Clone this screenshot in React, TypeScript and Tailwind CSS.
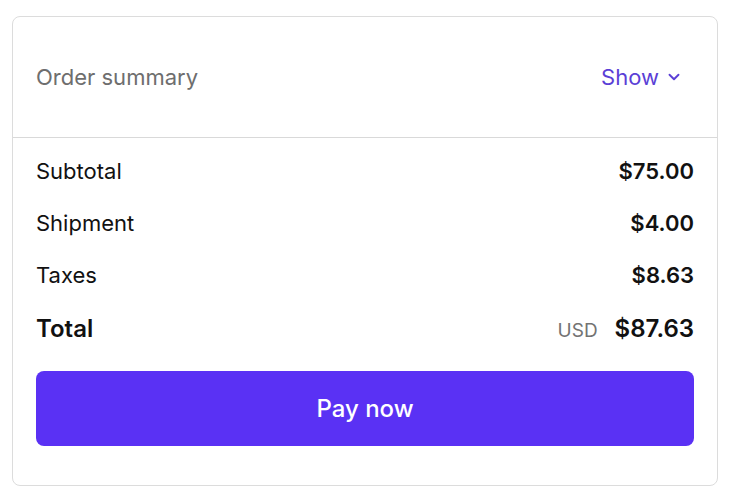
import { ChevronDown } from "lucide-react";

const rows = [
  { label: "Subtotal", value: "$75.00" },
  { label: "Shipment", value: "$4.00" },
  { label: "Taxes", value: "$8.63" },
];

export default function App() {
  return (
    <div className="min-h-[502px] w-[730px] bg-white pl-[12px] pt-[16px] font-['Inter',sans-serif] antialiased">
      <div className="w-[706px] h-[470px] rounded-[8px] border border-[#dcdcdc] bg-white">
        {/* Header */}
        <div className="flex h-[121px] items-center justify-between border-b border-[#d9d9d9] pl-[23px] pr-[34px]">
          <span className="text-[22px] text-[#6e6e6e]">Order summary</span>
          <button type="button" className="flex items-center gap-[6px] text-[22px] text-[#5b3fd6]">
            Show
            <ChevronDown className="h-[18px] w-[18px]" strokeWidth={2.5} />
          </button>
        </div>

        {/* Lines */}
        <div className="px-[23px] pt-[7px]">
          {rows.map((r) => (
            <div key={r.label} className="flex h-[52px] items-center justify-between text-[22px] text-[#111]">
              <span>{r.label}</span>
              <span className="font-semibold">{r.value}</span>
            </div>
          ))}
          <div className="flex h-[56px] items-center justify-between text-[#111]">
            <span className="text-[24px] font-semibold">Total</span>
            <span className="flex items-baseline gap-[17px]">
              <span className="text-[19px] text-[#737373]">USD</span>
              <span className="text-[24px] font-semibold">$87.63</span>
            </span>
          </div>
          <button
            type="button"
            className="mt-[14px] flex h-[75px] w-full items-center justify-center rounded-[8px] bg-[#5a31f4] text-[24px] font-medium text-white"
          >
            Pay now
          </button>
        </div>
      </div>
    </div>
  );
}
